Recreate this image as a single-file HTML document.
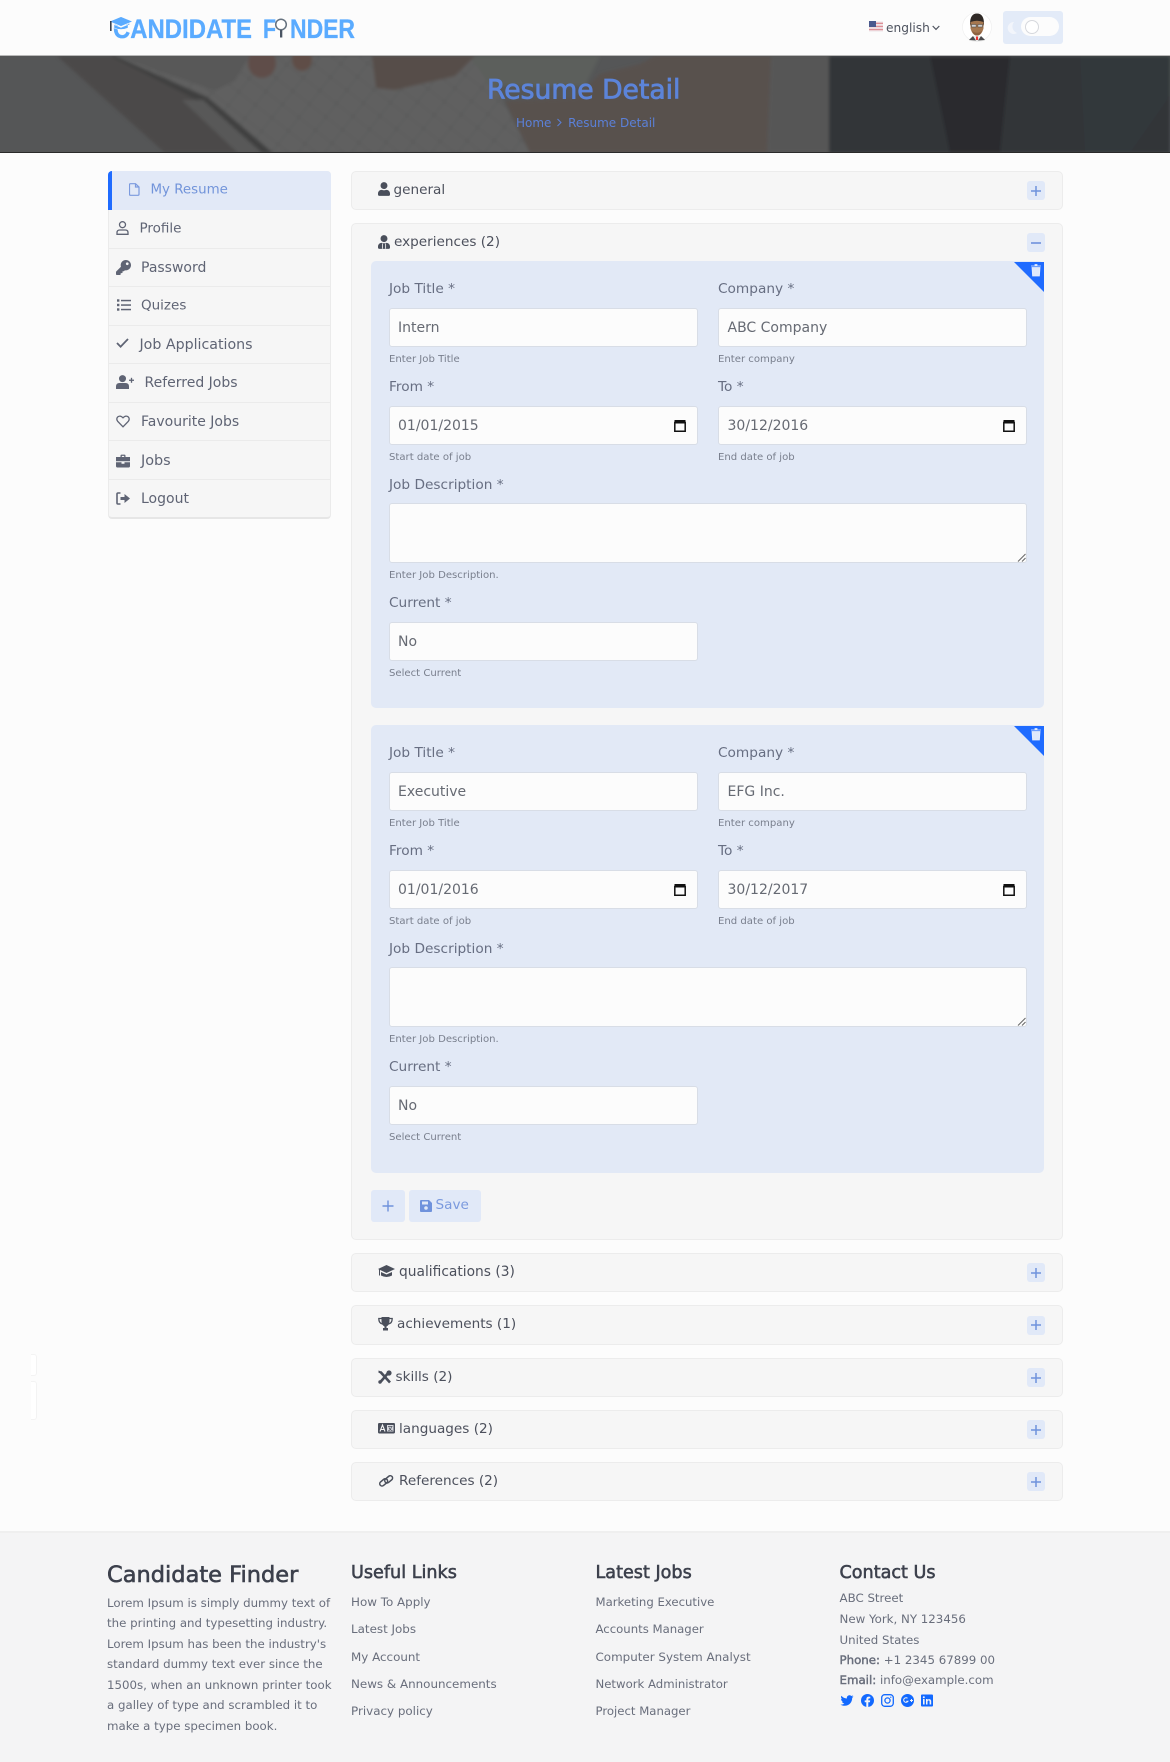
<!DOCTYPE html>
<html><head><meta charset="utf-8"><title>Resume Detail</title>
<style>
*{box-sizing:border-box}
html,body{margin:0;padding:0}
body{width:1170px;height:1762px;position:relative;overflow:hidden;background:#fcfcfc;font-family:"DejaVu Sans","Liberation Sans",sans-serif;color:#5d6272}
.t{position:absolute;white-space:nowrap;transform:translateY(calc(-50% + 1px));line-height:1}
.a{position:absolute;display:block}
.nav{font-size:14px;color:#5f6474}
.ph{font-size:13.6px;color:#4c505c}
.panel{position:absolute;left:351px;width:712px;background:#f6f6f6;border:1px solid #ececec;border-radius:5px}
.tg{position:absolute;left:1027px;width:18px;height:19px;background:#e1e9f8;border-radius:3px}
.tg svg{position:absolute;left:3px;top:3.5px}
.block{position:absolute;left:371px;width:673px;height:447px;background:#e2e9f6;border-radius:5px}
.l{font-size:13.7px;color:#676e82}
.h{font-size:10.1px;color:#797f8d}
.i{position:absolute;background:#fcfcfc;border:1px solid #d8dde6;border-radius:3px;height:39px}
.v{font-size:14px;color:#666a73}
.f{font-size:11.9px;color:#696e7c}
.fh{font-size:17.6px;color:#3c404c;-webkit-text-stroke:.55px #3c404c;margin-top:1px}
.r{border-bottom:1px solid #ebebeb;position:absolute;left:107.5px;width:223px;height:1px}
</style></head><body>

<!-- header -->
<div class="a" style="left:0;top:0;width:1170px;height:56px;background:#fcfcfc;border-bottom:1px solid #b9b9b9"></div>
<svg class="a" style="left:105px;top:10px" width="260" height="34" viewBox="0 0 260 34">
<text x="8" y="28" font-family="Liberation Sans" font-weight="700" font-size="26.500" fill="#5aabff" stroke="#5aabff" stroke-width=".3" textLength="139" lengthAdjust="spacingAndGlyphs">CANDIDATE</text>
<text x="158" y="28" font-family="Liberation Sans" font-weight="700" font-size="26.500" fill="#5aabff" stroke="#5aabff" stroke-width=".3" textLength="13" lengthAdjust="spacingAndGlyphs">F</text>
<text x="185" y="28" font-family="Liberation Sans" font-weight="700" font-size="26.500" fill="#5aabff" stroke="#5aabff" stroke-width=".3" textLength="65" lengthAdjust="spacingAndGlyphs">NDER</text>
<polygon points="4,11.500 16,6.500 28,11.500 16,16.500" fill="#5aabff" stroke="#fcfcfc" stroke-width=".8"/>
<rect x="5" y="11" width="1.600" height="10" fill="#3c4350"/>
<path d="M9 14.500v3.500q7 3 14 0v-3.500l-7 3z" fill="#5aabff" stroke="#fcfcfc" stroke-width=".5"/>
<circle cx="176" cy="14.500" r="5.300" fill="#fff" stroke="#66727f" stroke-width="1.500"/>
<rect x="175" y="20" width="2.300" height="7.500" fill="#4a5563"/>
</svg>
<svg class="a" style="left:869px;top:21px" width="14" height="11" viewBox="0 0 14 11">
<rect width="14" height="11" fill="#f4f0f2"/><rect y="1.600" width="14" height="1.500" fill="#dd8f96"/><rect y="4.700" width="14" height="1.500" fill="#dd8f96"/><rect y="7.800" width="14" height="1.500" fill="#dd8f96"/><rect width="7" height="6" fill="#4a5a8e"/>
</svg>
<span class="t" style="left:886px;top:26.500px;font-size:12.200px;color:#4d525e">english</span>
<svg class="a" style="left:932px;top:25px" width="8" height="6" viewBox="0 0 8 6"><path d="M.7 1l3.300 3.400L7.300 1" fill="none" stroke="#4d525e" stroke-width="1.200"/></svg>
<svg class="a" style="left:962px;top:12px" width="30" height="30" viewBox="0 0 30 30">
<circle cx="15" cy="15" r="14.500" fill="#fff" stroke="#eee" stroke-width=".6"/>
<path d="M8 12Q8 1.500 15 1.500t7 10.500l-.5 2h-13z" fill="#2f2926"/>
<path d="M7 28.500q1-4.500 8-4.500t8 4.500q-4 1.200-8 1.200t-8-1.200z" fill="#ebebeb"/>
<path d="M7 28l4-4 3 4.500zM23 28l-4-4-3 4.500z" fill="#4a4a4c"/>
<rect x="14" y="24.500" width="2" height="3.500" fill="#e33"/>
<path d="M8.500 10q6.500-2.500 13 0v6.500q-2 7-6.500 7t-6.500-7z" fill="#a5774f"/>
<path d="M10 19q5 3.500 10 0-1.500 4.500-5 4.500T10 19z" fill="#8c6140"/>
<rect x="9.500" y="12.500" width="4.600" height="2.500" fill="#d2d2d2" stroke="#444" stroke-width=".5"/><rect x="15.900" y="12.500" width="4.600" height="2.500" fill="#d2d2d2" stroke="#444" stroke-width=".5"/>
</svg>
<div class="a" style="left:1003px;top:11px;width:60px;height:33px;background:#e3ebf8;border-radius:3px"></div>
<svg class="a" style="left:1006px;top:21px" width="12" height="14" viewBox="0 0 12 14"><path d="M8 1a6 6 0 1 0 3 11A7 7 0 0 1 8 1z" fill="#f2f5fb"/></svg>
<div class="a" style="left:1021px;top:17px;width:38px;height:19px;background:#fcfcfc;border-radius:10px"></div>
<div class="a" style="left:1024.500px;top:19.500px;width:14.500px;height:14.500px;background:#fff;border:1px solid #d6d8dd;border-radius:50%"></div>

<!-- hero -->
<svg class="a" style="left:0;top:56px" width="1170" height="97" viewBox="0 0 1170 97">
<defs>
<filter id="b" x="-5%" y="-20%" width="110%" height="140%"><feGaussianBlur stdDeviation="1.500"/></filter>
<pattern id="k" width="21" height="17" patternUnits="userSpaceOnUse" patternTransform="rotate(38)">
<rect width="21" height="17" fill="#606161"/><path d="M0 0H21M0 0V17" stroke="#525252" stroke-width="1.300"/></pattern>
</defs>
<rect width="1170" height="97" fill="#555657"/>
<g filter="url(#b)">
<polygon points="57,0 115,0 207,41 273,97 165,97" fill="#4c4a48"/>
<polygon points="115,0 480,0 530,97 273,97 207,41" fill="url(#k)"/>
<polygon points="115,0 207,41 218,50 273,97 262,97 200,46 110,0" fill="#404040"/>
<polygon points="182,44 203,44 262,97 238,97" fill="#585959"/>
<polygon points="115,0 250,0 235,25 215,35 160,16" fill="#595959"/>
<polygon points="470,0 600,0 585,30 490,30" fill="#5c5e5c"/>
<polygon points="372,0 475,0 455,20 395,34 376,32" fill="#574d48"/>
<ellipse cx="262" cy="7" rx="14" ry="15" fill="#5f4e48"/>
<ellipse cx="302" cy="4" rx="10" ry="11" fill="#5f4d47"/>
<polygon points="505,45 575,42 600,18 640,8 655,0 771,0 767,97 530,97" fill="#58514e"/>
<polygon points="771,0 829,0 837,97 767,97" fill="#575757"/>
<rect x="829" width="341" height="97" fill="#303438"/>
<polygon points="930,0 1010,0 1000,97 950,97" fill="#2b2c2e"/>
<polygon points="1080,0 1170,0 1170,40 1130,97 1085,97" fill="#33373b"/>
</g>
<rect y="96" width="1170" height="1" fill="#2a2a2a"/>
</svg>
<span class="t" style="left:487px;top:90px;font-size:26.600px;color:#5c84d9;-webkit-text-stroke:.8px #5c84d9">Resume Detail</span>
<span class="t" style="left:516px;top:121.500px;font-size:12px;color:#5b80d8">Home <svg width="7" height="9" viewBox="0 0 7 9" style="margin:0 1px"><path d="M1.500 1l3.500 3.500L1.500 8" fill="none" stroke="#5b80d8" stroke-width="1"/></svg> Resume Detail</span>

<!-- sidebar -->
<div class="a" style="left:107.500px;top:171px;width:223px;height:348px;background:#f6f6f6;border:1px solid #ebebeb;border-bottom:2px solid #e6e6e6;border-radius:4px"></div>
<div class="a" style="left:107.500px;top:171px;width:223px;height:39px;background:#e2e9f7;border-radius:4px 4px 0 0;border-left:4px solid #1f6bff"></div>
<div class="r" style="top:248px"></div><div class="r" style="top:286px"></div><div class="r" style="top:325px"></div><div class="r" style="top:363px"></div><div class="r" style="top:402px"></div><div class="r" style="top:440px"></div><div class="r" style="top:479px"></div>

<svg class="a" style="left:129px;top:183px" width="11" height="13" viewBox="0 0 11 13"><path d="M1.500.7h5L10 4v7.300q0 1-1 1H1.500q-1 0-1-1V1.700q0-1 1-1zM6.500.7V4H10" fill="none" stroke="#7b9ade" stroke-width="1.200"/></svg>
<span class="t nav" style="left:150.500px;top:189px;color:#7294da;font-size:13.400px">My Resume</span>

<svg class="a" style="left:116px;top:221px" width="13" height="14" viewBox="0 0 13 14" fill="none" stroke="#5f6474" stroke-width="1.300"><circle cx="6.500" cy="3.700" r="3"/><path d="M1 13.300v-1.600q0-2.700 2.700-2.700h5.600q2.700 0 2.700 2.700v1.600z"/></svg>
<span class="t nav" style="left:139.500px;top:228px;font-size:13.500px">Profile</span>

<svg class="a" style="left:116px;top:260px" width="15" height="15" viewBox="0 0 512 512"><path fill="#5f6474" d="M512 176.001C512 273.203 433.202 352 336 352c-11.220 0-22.190-1.062-32.827-3.069l-24.012 27.014A23.999 23.999 0 0 1 261.223 384H224v40c0 13.255-10.745 24-24 24h-40v40c0 13.255-10.745 24-24 24H24c-13.255 0-24-10.745-24-24v-78.059c0-6.365 2.529-12.470 7.029-16.971l161.802-161.802C163.108 213.814 160 195.271 160 176 160 78.798 238.797.001 335.999 0 433.488-.001 512 78.511 512 176.001zM336 128c0 26.510 21.490 48 48 48s48-21.490 48-48-21.490-48-48-48-48 21.490-48 48z"/></svg>
<span class="t nav" style="left:141px;top:266.500px">Password</span>

<svg class="a" style="left:117px;top:299px" width="14" height="12" viewBox="0 0 14 12"><g fill="#5f6474"><rect width="2.400" height="2.400" y=".3"/><rect width="2.400" height="2.400" y="4.800"/><rect width="2.400" height="2.400" y="9.300"/><rect x="4" y=".8" width="10" height="1.500"/><rect x="4" y="5.300" width="10" height="1.500"/><rect x="4" y="9.800" width="10" height="1.500"/></g></svg>
<span class="t nav" style="left:141px;top:305px;font-size:13.500px">Quizes</span>

<svg class="a" style="left:116px;top:338px" width="13" height="10" viewBox="0 0 13 10"><path d="M1 5l3.600 3.700L12 1" fill="none" stroke="#5f6474" stroke-width="1.800"/></svg>
<span class="t nav" style="left:139.500px;top:343.500px;font-size:14.200px">Job Applications</span>

<svg class="a" style="left:116px;top:375px" width="18" height="14" viewBox="0 0 18 14"><g fill="#5f6474"><circle cx="6.500" cy="3.600" r="3.500"/><path d="M0 14v-2.500Q0 8 3.500 8h6q3.500 0 3.500 3.500V14z"/><rect x="13" y="4.600" width="5" height="1.300"/><rect x="14.850" y="2.800" width="1.300" height="5"/></g></svg>
<span class="t nav" style="left:144.500px;top:382px">Referred Jobs</span>

<svg class="a" style="left:116px;top:415px" width="14" height="13" viewBox="0 0 14 13"><path d="M7 11.800L1.800 6.500Q-.2 3.800 1.800 1.900q2.600-1.900 5.200.9 2.600-2.800 5.200-.9 2 1.900 0 4.600z" fill="none" stroke="#5f6474" stroke-width="1.300"/></svg>
<span class="t nav" style="left:141px;top:420.500px">Favourite Jobs</span>

<svg class="a" style="left:116px;top:454px" width="14" height="14" viewBox="0 0 14 14"><g fill="#5f6474"><path d="M4.500 3V1.600Q4.500.6 5.500.6h3q1 0 1 1V3H14v4.300H0V3zM5.800 3h2.400V1.900H5.800z"/><path d="M0 8.300h5.500v1.400h3V8.300H14v4q0 1.200-1.200 1.200H1.200Q0 13.500 0 12.300z"/></g></svg>
<span class="t nav" style="left:141px;top:459.500px;font-size:14.400px">Jobs</span>

<svg class="a" style="left:116px;top:492px" width="14" height="13" viewBox="0 0 14 13"><path d="M4.500 1H2Q1 1 1 2v9q0 1 1 1h2.500" fill="none" stroke="#5f6474" stroke-width="1.600"/><path d="M4.500 5h4V2l5.500 4.500L8.500 11V8h-4z" fill="#5f6474"/></svg>
<span class="t nav" style="left:141px;top:498px">Logout</span>

<!-- panels -->
<div class="panel" style="top:171px;height:39px"></div>
<div class="panel" style="top:223px;height:1017px"></div>
<div class="panel" style="top:1253px;height:39px"></div>
<div class="panel" style="top:1305px;height:39.500px"></div>
<div class="panel" style="top:1358px;height:39px"></div>
<div class="panel" style="top:1410px;height:39px"></div>
<div class="panel" style="top:1462px;height:39px"></div>

<svg class="a" style="left:378px;top:182px" width="12" height="14" viewBox="0 0 448 512"><path fill="#4a4f5b" d="M224 256c70.700 0 128-57.300 128-128S294.700 0 224 0 96 57.300 96 128s57.300 128 128 128zm89.600 32h-16.700c-22.200 10.200-46.900 16-72.900 16s-50.600-5.800-72.900-16h-16.700C60.200 288 0 348.200 0 422.400V464c0 26.500 21.500 48 48 48h352c26.500 0 48-21.500 48-48v-41.600c0-74.200-60.200-134.400-134.400-134.400z"/></svg>
<span class="t ph" style="left:393.500px;top:189.500px">general</span>
<div class="tg" style="top:181px"><svg width="12" height="12" viewBox="0 0 12 12"><path d="M6 1v10M1 6h10" stroke="#6f92dc" stroke-width="1.500"/></svg></div>

<svg class="a" style="left:378px;top:235px" width="12" height="14" viewBox="0 0 448 512"><path fill="#4a4f5b" d="M224 256c70.700 0 128-57.300 128-128S294.700 0 224 0 96 57.300 96 128s57.300 128 128 128zm89.600 32h-16.700c-22.200 10.200-46.900 16-72.900 16s-50.600-5.800-72.900-16h-16.700C60.200 288 0 348.200 0 422.400V464c0 26.500 21.500 48 48 48h352c26.500 0 48-21.500 48-48v-41.600c0-74.200-60.200-134.400-134.400-134.400z"/><path fill="#f6f6f6" d="M150 310h30v200h-30zM270 310h30v200h-30z"/></svg>
<span class="t ph" style="left:394px;top:241.500px">experiences (2)</span>
<div class="tg" style="top:233px"><svg width="12" height="12" viewBox="0 0 12 12"><path d="M1 6h10" stroke="#6f92dc" stroke-width="1.600"/></svg></div>

<!-- block 1 -->
<div class="block" style="top:261px">
<svg class="a" style="left:643px;top:1px" width="30" height="30" viewBox="0 0 30 30"><polygon points="0,0 30,0 30,30" fill="#1f6bff"/><path d="M17 4h10M21 4V2.500h2V4M18 5.500h8l-.6 8.500h-6.800z" fill="#dfe8fb" stroke="#e8eefb" stroke-width=".8"/></svg>
<span class="t l" style="left:18px;top:28px">Job Title *</span>
<span class="t l" style="left:347px;top:28px">Company *</span>
<div class="i" style="left:18px;top:47px;width:309px"></div><span class="t v" style="left:27px;top:66px">Intern</span>
<div class="i" style="left:347px;top:47px;width:309px"></div><span class="t v" style="left:356.500px;top:66px">ABC Company</span>
<span class="t h" style="left:18px;top:97.500px">Enter Job Title</span>
<span class="t h" style="left:347px;top:97.500px">Enter company</span>
<span class="t l" style="left:18px;top:125.500px">From *</span>
<span class="t l" style="left:347px;top:125.500px">To *</span>
<div class="i" style="left:18px;top:145px;width:309px"></div><span class="t v" style="left:27px;top:164px">01/01/2015</span>
<div class="i" style="left:347px;top:145px;width:309px"></div><span class="t v" style="left:356.500px;top:164px">30/12/2016</span>
<svg class="a" style="left:303px;top:158px" width="12" height="13" viewBox="0 0 12 13"><path d="M.8 3.500h10.400v8.700H.8z" fill="none" stroke="#111" stroke-width="1.500"/><rect x=".5" y="1" width="11" height="3.500" fill="#111"/></svg>
<svg class="a" style="left:632px;top:158px" width="12" height="13" viewBox="0 0 12 13"><path d="M.8 3.500h10.400v8.700H.8z" fill="none" stroke="#111" stroke-width="1.500"/><rect x=".5" y="1" width="11" height="3.500" fill="#111"/></svg>
<span class="t h" style="left:18px;top:195.500px">Start date of job</span>
<span class="t h" style="left:347px;top:195.500px">End date of job</span>
<span class="t l" style="left:18px;top:223.500px">Job Description *</span>
<div class="i" style="left:18px;top:242px;width:638px;height:60px"></div>
<svg class="a" style="left:646px;top:292px" width="9" height="9" viewBox="0 0 9 9"><path d="M8.500 1L1 8.500M8.500 5L5 8.500" stroke="#666" stroke-width="1"/></svg>
<span class="t h" style="left:18px;top:313.500px">Enter Job Description.</span>
<span class="t l" style="left:18px;top:341.500px">Current *</span>
<div class="i" style="left:18px;top:361px;width:309px"></div><span class="t v" style="left:27px;top:380px">No</span>
<span class="t h" style="left:18px;top:411.500px">Select Current</span>
</div>

<!-- block 2 -->
<div class="block" style="top:725px;height:447.500px">
<svg class="a" style="left:643px;top:1px" width="30" height="30" viewBox="0 0 30 30"><polygon points="0,0 30,0 30,30" fill="#1f6bff"/><path d="M17 4h10M21 4V2.500h2V4M18 5.500h8l-.6 8.500h-6.800z" fill="#dfe8fb" stroke="#e8eefb" stroke-width=".8"/></svg>
<span class="t l" style="left:18px;top:28px">Job Title *</span>
<span class="t l" style="left:347px;top:28px">Company *</span>
<div class="i" style="left:18px;top:47px;width:309px"></div><span class="t v" style="left:27px;top:66px">Executive</span>
<div class="i" style="left:347px;top:47px;width:309px"></div><span class="t v" style="left:356.500px;top:66px">EFG Inc.</span>
<span class="t h" style="left:18px;top:97.500px">Enter Job Title</span>
<span class="t h" style="left:347px;top:97.500px">Enter company</span>
<span class="t l" style="left:18px;top:125.500px">From *</span>
<span class="t l" style="left:347px;top:125.500px">To *</span>
<div class="i" style="left:18px;top:145px;width:309px"></div><span class="t v" style="left:27px;top:164px">01/01/2016</span>
<div class="i" style="left:347px;top:145px;width:309px"></div><span class="t v" style="left:356.500px;top:164px">30/12/2017</span>
<svg class="a" style="left:303px;top:158px" width="12" height="13" viewBox="0 0 12 13"><path d="M.8 3.500h10.400v8.700H.8z" fill="none" stroke="#111" stroke-width="1.500"/><rect x=".5" y="1" width="11" height="3.500" fill="#111"/></svg>
<svg class="a" style="left:632px;top:158px" width="12" height="13" viewBox="0 0 12 13"><path d="M.8 3.500h10.400v8.700H.8z" fill="none" stroke="#111" stroke-width="1.500"/><rect x=".5" y="1" width="11" height="3.500" fill="#111"/></svg>
<span class="t h" style="left:18px;top:195.500px">Start date of job</span>
<span class="t h" style="left:347px;top:195.500px">End date of job</span>
<span class="t l" style="left:18px;top:223.500px">Job Description *</span>
<div class="i" style="left:18px;top:242px;width:638px;height:60px"></div>
<svg class="a" style="left:646px;top:292px" width="9" height="9" viewBox="0 0 9 9"><path d="M8.500 1L1 8.500M8.500 5L5 8.500" stroke="#666" stroke-width="1"/></svg>
<span class="t h" style="left:18px;top:313.500px">Enter Job Description.</span>
<span class="t l" style="left:18px;top:341.500px">Current *</span>
<div class="i" style="left:18px;top:361px;width:309px"></div><span class="t v" style="left:27px;top:380px">No</span>
<span class="t h" style="left:18px;top:411.500px">Select Current</span>
</div>

<!-- buttons -->
<div class="a" style="left:371px;top:1190px;width:34px;height:32px;background:#e1e9f8;border-radius:3px"></div>
<svg class="a" style="left:382px;top:1200px" width="12" height="12" viewBox="0 0 12 12"><path d="M6 .5v11M.5 6h11" stroke="#6f92dc" stroke-width="1.400"/></svg>
<div class="a" style="left:409px;top:1190px;width:71.500px;height:32px;background:#e1e9f8;border-radius:3px"></div>
<svg class="a" style="left:420px;top:1200px" width="12" height="12" viewBox="0 0 12 12"><path d="M1 0h8l3 3v8q0 1-1 1H1q-1 0-1-1V1q0-1 1-1z" fill="#6f92dc"/><rect x="2" y="1.500" width="6" height="3" fill="#e1e9f8"/><circle cx="6" cy="8" r="1.800" fill="#e1e9f8"/></svg>
<span class="t" style="left:435.500px;top:1205px;font-size:13.600px;color:#7b9ade">Save</span>

<!-- collapsed rows -->
<svg class="a" style="left:378px;top:1265px" width="17" height="13" viewBox="0 0 17 13"><polygon points="0,4 8.500,0 17,4 8.500,8" fill="#4a4f5b"/><path d="M3 7v3.500q5.500 3 11 0V7L8.500 9.500z" fill="#4a4f5b"/><rect x="1" y="4.500" width="1" height="6" fill="#4a4f5b"/></svg>
<span class="t ph" style="left:399px;top:1271.500px;font-size:13.800px">qualifications (3)</span>
<div class="tg" style="top:1263px"><svg width="12" height="12" viewBox="0 0 12 12"><path d="M6 1v10M1 6h10" stroke="#6f92dc" stroke-width="1.500"/></svg></div>

<svg class="a" style="left:378px;top:1317px" width="15" height="14" viewBox="0 0 15 14"><path d="M3.500 0h8v4q0 4-3 5.500V11H10v2.500H5V11h1.500V9.500q-3-1.500-3-5.500z" fill="#4a4f5b"/><path d="M3.500 1.500H.8q0 5 4 5.500M11.500 1.500h2.700q0 5-4 5.500" fill="none" stroke="#4a4f5b" stroke-width="1.300"/></svg>
<span class="t ph" style="left:397px;top:1324px">achievements (1)</span>
<div class="tg" style="top:1315.500px"><svg width="12" height="12" viewBox="0 0 12 12"><path d="M6 1v10M1 6h10" stroke="#6f92dc" stroke-width="1.500"/></svg></div>

<svg class="a" style="left:378px;top:1370px" width="14" height="14" viewBox="0 0 14 14"><path d="M2 12.500L11 2M2.500 2l9.500 10.500" stroke="#4a4f5b" stroke-width="2.600" fill="none"/><circle cx="11" cy="3" r="2.600" fill="#4a4f5b"/><circle cx="2" cy="12" r="1.700" fill="#4a4f5b"/><path d="M.5.500l3 1-.8 2-2.200-.8z" fill="#4a4f5b"/></svg>
<span class="t ph" style="left:395.500px;top:1376.500px">skills (2)</span>
<div class="tg" style="top:1368px"><svg width="12" height="12" viewBox="0 0 12 12"><path d="M6 1v10M1 6h10" stroke="#6f92dc" stroke-width="1.500"/></svg></div>

<svg class="a" style="left:378px;top:1423px" width="17" height="11" viewBox="0 0 17 11"><rect width="17" height="10.500" rx="1.200" fill="#4a4f5b"/><rect x="9" y="2" width="6.500" height="6.500" fill="#d9dbe0"/><path d="M2 8.500L4.500 2 7 8.500M3 6.500h3" stroke="#f6f6f6" stroke-width="1.100" fill="none"/><path d="M10 3.500h4.500M13.500 3.500Q13 7 10.300 7.800M11 4.500q1 2.500 3.500 3.300" stroke="#4a4f5b" stroke-width=".8" fill="none"/></svg>
<span class="t ph" style="left:399px;top:1428.500px">languages (2)</span>
<div class="tg" style="top:1420px"><svg width="12" height="12" viewBox="0 0 12 12"><path d="M6 1v10M1 6h10" stroke="#6f92dc" stroke-width="1.500"/></svg></div>

<svg class="a" style="left:378px;top:1474px" width="16" height="14" viewBox="0 0 16 14"><g fill="none" stroke="#4a4f5b" stroke-width="1.500"><rect x="-4.200" y="-2.300" width="8.800" height="4.600" rx="2.300" transform="translate(5.500 8.500) rotate(-40)"/><rect x="-4.200" y="-2.300" width="8.800" height="4.600" rx="2.300" transform="translate(10.500 5.500) rotate(-40)"/></g></svg>
<span class="t ph" style="left:399px;top:1480.500px">References (2)</span>
<div class="tg" style="top:1472px"><svg width="12" height="12" viewBox="0 0 12 12"><path d="M6 1v10M1 6h10" stroke="#6f92dc" stroke-width="1.500"/></svg></div>

<!-- floating -->
<div class="a" style="left:31px;top:1354px;width:6px;height:22px;background:#fff;border:1px solid #f3f3f3;border-left:0;border-radius:0 3px 3px 0"></div>
<div class="a" style="left:31px;top:1381px;width:6px;height:39px;background:#fff;border:1px solid #f3f3f3;border-left:0;border-radius:0 3px 3px 0"></div>

<!-- footer -->
<div class="a" style="left:0;top:1531px;width:1170px;height:231px;background:#f4f4f5;border-top:2px solid #efefef"></div>
<span class="t" style="left:107px;top:1574px;font-size:22.500px;color:#3c404c;-webkit-text-stroke:.6px #3c404c">Candidate Finder</span>
<span class="t f" style="left:107px;top:1602.500px;font-size:11.800px">Lorem Ipsum is simply dummy text of</span>
<span class="t f" style="left:107px;top:1623px;font-size:11.800px">the printing and typesetting industry.</span>
<span class="t f" style="left:107px;top:1643.500px;font-size:11.800px">Lorem Ipsum has been the industry's</span>
<span class="t f" style="left:107px;top:1664px;font-size:11.800px">standard dummy text ever since the</span>
<span class="t f" style="left:107px;top:1684.500px;font-size:11.800px">1500s, when an unknown printer took</span>
<span class="t f" style="left:107px;top:1705px;font-size:11.800px">a galley of type and scrambled it to</span>
<span class="t f" style="left:107px;top:1725.500px;font-size:11.800px">make a type specimen book.</span>

<span class="t fh" style="left:351px;top:1572px">Useful Links</span>
<span class="t f" style="left:351px;top:1602px">How To Apply</span>
<span class="t f" style="left:351px;top:1629px">Latest Jobs</span>
<span class="t f" style="left:351px;top:1656.500px">My Account</span>
<span class="t f" style="left:351px;top:1684px">News &amp; Announcements</span>
<span class="t f" style="left:351px;top:1711px">Privacy policy</span>

<span class="t fh" style="left:595.500px;top:1572px">Latest Jobs</span>
<span class="t f" style="left:595.500px;top:1602px;font-size:11.700px">Marketing Executive</span>
<span class="t f" style="left:595.500px;top:1629px;font-size:11.700px">Accounts Manager</span>
<span class="t f" style="left:595.500px;top:1656.500px;font-size:11.900px">Computer System Analyst</span>
<span class="t f" style="left:595.500px;top:1684px;font-size:11.700px">Network Administrator</span>
<span class="t f" style="left:595.500px;top:1711px;font-size:11.700px">Project Manager</span>

<span class="t fh" style="left:839.500px;top:1572px">Contact Us</span>
<span class="t f" style="left:839.500px;top:1598px;font-size:11.800px">ABC Street</span>
<span class="t f" style="left:839.500px;top:1619px;font-size:11.800px">New York, NY 123456</span>
<span class="t f" style="left:839.500px;top:1639.500px;font-size:11.800px">United States</span>
<span class="t f" style="left:839.500px;top:1660px;font-size:11.800px"><span style="-webkit-text-stroke:.45px #696e7c">Phone:</span> +1 2345 67899 00</span>
<span class="t f" style="left:839.500px;top:1680px;font-size:11.800px"><span style="-webkit-text-stroke:.45px #696e7c">Email:</span> info@example.com</span>

<svg class="a" style="left:839.500px;top:1694px" width="14" height="13" viewBox="0 0 512 512"><path fill="#1269ff" d="M459.370 151.716c.325 4.548.325 9.097.325 13.645 0 138.720-105.583 298.558-298.558 298.558-59.452 0-114.680-17.219-161.137-47.106 8.447.974 16.568 1.299 25.340 1.299 49.055 0 94.213-16.568 130.274-44.832-46.132-.975-84.792-31.188-98.112-72.772 6.498.974 12.995 1.624 19.818 1.624 9.421 0 18.843-1.300 27.614-3.573-48.081-9.747-84.143-51.980-84.143-102.985v-1.299c13.969 7.797 30.214 12.670 47.431 13.319-28.264-18.843-46.781-51.005-46.781-87.391 0-19.492 5.197-37.360 14.294-52.954 51.655 63.675 129.300 105.258 216.365 109.807-1.624-7.797-2.599-15.918-2.599-24.040 0-57.828 46.782-104.934 104.934-104.934 30.213 0 57.502 12.670 76.670 33.137 23.715-4.548 46.456-13.320 66.599-25.340-7.798 24.366-24.366 44.833-46.132 57.827 21.117-2.273 41.584-8.122 60.426-16.243-14.292 20.791-32.161 39.308-52.628 54.253z"/></svg>
<svg class="a" style="left:860.500px;top:1694px" width="13" height="13" viewBox="0 0 13 13"><circle cx="6.500" cy="6.500" r="6.500" fill="#1269ff"/><path d="M7.300 13V8.300h1.600l.3-1.900H7.300V5.300q0-.9 1-.9h1V2.800q-3.800-.8-4 2.200v1.400H3.700v1.900h1.600V13z" fill="#f4f4f5"/></svg>
<svg class="a" style="left:881px;top:1694px" width="13" height="13" viewBox="0 0 13 13" fill="none" stroke="#1269ff" stroke-width="1.300"><rect x=".7" y=".7" width="11.600" height="11.600" rx="3"/><circle cx="6.500" cy="6.500" r="2.600"/><circle cx="9.800" cy="3.200" r=".5" fill="#1269ff" stroke-width=".4"/></svg>
<svg class="a" style="left:900.500px;top:1694px" width="13" height="13" viewBox="0 0 13 13"><circle cx="6.500" cy="6.500" r="6.500" fill="#1269ff"/><path d="M6.500 4.300a2.300 2.300 0 1 0 .4 3H5.300M9 6.500h3M10.500 5v3" fill="none" stroke="#f4f4f5" stroke-width="1"/></svg>
<svg class="a" style="left:921px;top:1694px" width="12" height="13" viewBox="0 0 12 13"><rect y=".5" width="12" height="12" rx="1" fill="#1269ff"/><rect x="2" y="5" width="1.600" height="5.500" fill="#f4f4f5"/><circle cx="2.800" cy="3.300" r="1" fill="#f4f4f5"/><path d="M5 10.500V5h1.500v.8q2.800-1.800 3.700 1v3.700H8.600V7.500q-.2-1.400-1.300-1-1 .3-.8 1.600v2.400z" fill="#f4f4f5"/></svg>
</body></html>
